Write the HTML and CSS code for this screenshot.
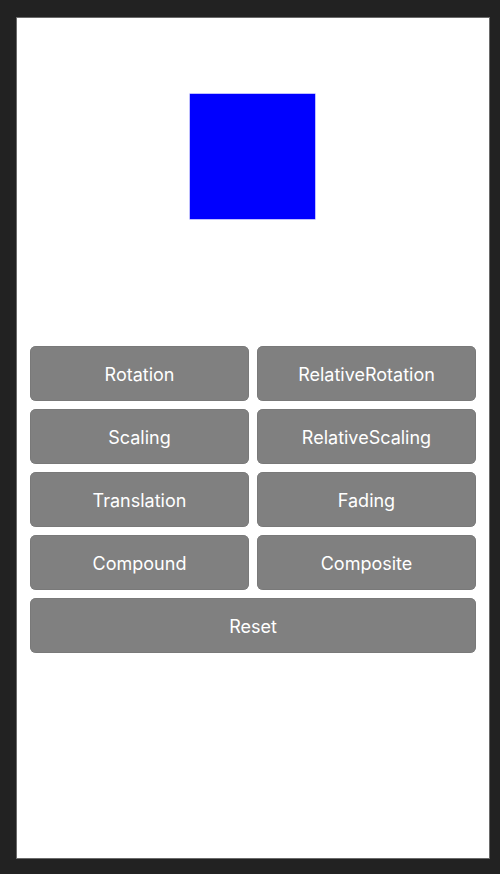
FILE: index.html
```html
<!DOCTYPE html>
<html>
<head>
<meta charset="utf-8">
<link rel="stylesheet" href="styles.css">
</head>
<body>
<div class="screen">
  <div class="stage">
    <div class="square"></div>
  </div>
  <div class="buttons">
    <div class="btn">Rotation</div>
    <div class="btn">RelativeRotation</div>
    <div class="btn">Scaling</div>
    <div class="btn">RelativeScaling</div>
    <div class="btn">Translation</div>
    <div class="btn">Fading</div>
    <div class="btn">Compound</div>
    <div class="btn">Composite</div>
    <div class="btn wide">Reset</div>
  </div>
</div>
</body>
</html>
```
FILE: styles.css
```css
html, body {
  margin: 0;
  padding: 0;
  background: #222222;
}
body {
  padding: 17px 0 0 16px;
  height: 874px;
  box-sizing: border-box;
}
.screen {
  width: 472px;
  height: 840px;
  background: #ffffff;
  border: 1px solid #6a6a6a;
  font-family: Inter, "Noto Sans", "Liberation Sans", sans-serif;
}
.stage {
  height: 328px;
  display: flex;
  justify-content: center;
  align-items: flex-start;
  padding-top: 76px;
  padding-right: 2px;
  box-sizing: border-box;
}
.square {
  width: 125px;
  height: 125px;
  background: #0000ff;
  box-shadow: 0 0 0 0.5px rgba(0, 0, 255, 0.5);
}
.buttons {
  margin: 0 13px;
  display: grid;
  grid-template-columns: 1fr 1fr;
  gap: 8px;
}
.btn {
  height: 55px;
  background: #808080;
  border-radius: 6px;
  color: #ffffff;
  font-size: 18px;
  padding-top: 2px;
  box-sizing: border-box;
  display: flex;
  align-items: center;
  justify-content: center;
  box-shadow: inset 0 0 0 0.5px #727272;
}
.wide {
  grid-column: 1 / 3;
}
```
